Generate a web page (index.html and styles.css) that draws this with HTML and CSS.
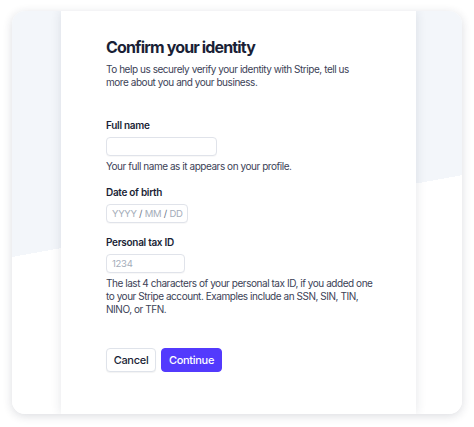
FILE: index.html
```html
<!DOCTYPE html>
<html>
<head>
<meta charset="utf-8">
<link rel="stylesheet" href="styles.css">
</head>
<body>
<div class="frame">
  <div class="panel">
    <h1 class="title">Confirm your identity</h1>
    <p class="intro">To help us securely verify your identity with Stripe, tell us more about you and your business.</p>

    <div class="field first">
      <label class="label">Full name</label>
      <div class="input w-name"></div>
      <p class="help">Your full name as it appears on your profile.</p>
    </div>

    <div class="field">
      <label class="label">Date of birth</label>
      <div class="input w-dob"><span class="ph">YYYY</span><span class="sep">/</span><span class="ph">MM</span><span class="sep">/</span><span class="ph">DD</span></div>
    </div>

    <div class="field">
      <label class="label">Personal tax ID</label>
      <div class="input w-tax"><span class="ph">1234</span></div>
      <p class="help">The last 4 characters of your personal tax ID, if you added one to your Stripe account. Examples include an SSN, SIN, TIN, NINO, or TFN.</p>
    </div>

    <div class="actions">
      <button class="btn btn-secondary">Cancel</button>
      <button class="btn btn-primary">Continue</button>
    </div>
  </div>
</div>
</body>
</html>
```
FILE: styles.css
```css
* { box-sizing: border-box; }
html, body { margin: 0; padding: 0; background: #ffffff; }
body {
  font-family: Inter, "Liberation Sans", Arial, sans-serif;
  color: #3c4257;
  padding: 11px 12px 13px 12px;
}
.frame {
  height: 403px;
  border-radius: 13px;
  overflow: hidden;
  background: linear-gradient(169.7deg, #f3f6fa 242px, #ffffff 242px);
  box-shadow: 0 2px 10px rgba(30, 40, 60, 0.16);
  padding: 0 46px 0 49px;
}
.panel {
  height: 100%;
  background: #ffffff;
  box-shadow: 0 0 10px rgba(40, 50, 70, 0.12);
  padding: 25px 28px 0 45px;
}
.title {
  margin: 0;
  font-size: 16px;
  line-height: 22px;
  font-weight: 700;
  color: #1a1f36;
  letter-spacing: -0.85px;
}
.intro {
  margin: 5px 0 0 0;
  max-width: 252px;
  font-size: 10px;
  line-height: 13px;
  color: #3c4257;
  letter-spacing: -0.45px;
}
.field { margin-top: 12.5px; }
.field.first { margin-top: 29.5px; }
.label {
  display: block;
  font-size: 10px;
  line-height: 13px;
  font-weight: 600;
  color: #1a1f36;
  letter-spacing: -0.3px;
}
.input {
  margin-top: 5px;
  height: 19.5px;
  border: 1px solid #e0e3ea;
  border-radius: 4px;
  background: #fff;
  box-shadow: 0 1px 1px rgba(0,0,0,0.03);
  display: flex;
  align-items: center;
  padding: 0 5px;
  font-size: 9.5px;
  color: #a3acb9;
  letter-spacing: -0.3px;
}
.w-name { width: 111px; }
.w-dob { width: 82px; }
.w-tax { width: 79px; }
.sep { color: #697386; margin: 0 2.5px; }
.help {
  margin: 4px 0 0 0;
  max-width: 276px;
  font-size: 10px;
  line-height: 13px;
  color: #3c4257;
  letter-spacing: -0.45px;
}
.actions {
  margin-top: 31.5px;
  display: flex;
  gap: 5px;
}
.btn {
  height: 24px;
  border-radius: 4px;
  font-family: inherit;
  font-size: 11px;
  font-weight: 500;
  letter-spacing: -0.3px;
  padding: 0;
  cursor: pointer;
}
.btn-secondary {
  background: #fff;
  border: 1px solid #dfe3ea;
  color: #1a1f36;
  box-shadow: 0 1px 1px rgba(0,0,0,0.05);
  width: 50px;
}
.btn-primary {
  background: #533afd;
  border: 1px solid #533afd;
  color: #fff;
  width: 61px;
}
```
